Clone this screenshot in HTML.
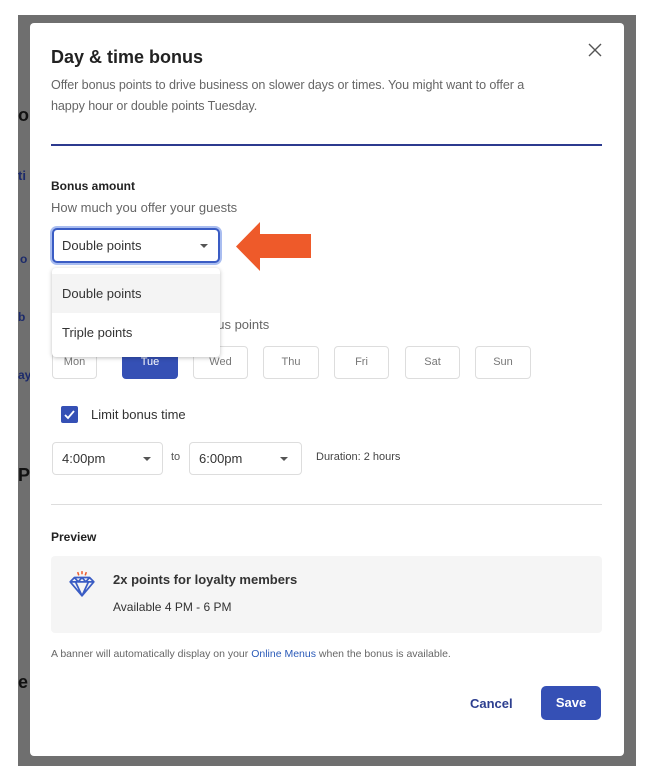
<!DOCTYPE html>
<html><head><meta charset="utf-8"><style>
*{box-sizing:border-box;margin:0;padding:0}
body{width:652px;height:780px;background:#fff;font-family:"Liberation Sans",sans-serif;position:relative;overflow:hidden;color:#222}
.ov{position:absolute;left:18px;top:15px;width:618px;height:751px;background:#6f6f6f}
.bg{position:absolute;color:#1c2a6a;font-weight:bold;font-size:14px}
.m{position:absolute;left:30px;top:23px;width:594px;height:733px;background:#fff;border-radius:4px}
.a{position:absolute}
.t{font-size:18px;font-weight:bold;color:#222}
.g{color:#666;font-size:13px}
.day{position:absolute;top:323px;height:33px;border:1px solid #ddd;border-radius:4px;font-size:11px;color:#777;text-align:center;line-height:31px;background:#fff}
.sel{position:absolute;border:1px solid #ddd;border-radius:4px;height:33px;font-size:13px;line-height:31px;padding-left:9px;color:#333}
.car{position:absolute;width:0;height:0;border-left:4px solid transparent;border-right:4px solid transparent;border-top:4px solid #555}
</style></head><body>
<div class="ov"></div>
<div class="bg" style="left:18px;top:105px;font-size:18px;color:#111">o</div>
<div class="bg" style="left:18px;top:168px;font-size:13px">ti</div>
<div class="bg" style="left:20px;top:252px;font-size:12px">o</div>
<div class="bg" style="left:18px;top:310px;font-size:12px">b</div>
<div class="bg" style="left:18px;top:368px;font-size:12px">ay</div>
<div class="bg" style="left:18px;top:465px;font-size:18px;color:#111">P</div>
<div class="bg" style="left:18px;top:672px;font-size:18px;color:#111">e</div>

<div class="m">
<div class="a t" style="left:21px;top:24px">Day &amp; time bonus</div>
<svg class="a" style="left:558px;top:20px" width="14" height="14"><path d="M1 1L13 13M13 1L1 13" stroke="#555" stroke-width="1.4"/></svg>
<div class="a g" style="left:21px;top:52px;width:570px;line-height:21px;font-size:12.6px;letter-spacing:-0.1px;white-space:nowrap">Offer bonus points to drive business on slower days or times. You might want to offer a<br>happy hour or double points Tuesday.</div>
<div class="a" style="left:21px;top:121px;width:551px;height:2px;background:#2c3a8f"></div>
<div class="a" style="left:21px;top:156px;font-size:12px;font-weight:bold">Bonus amount</div>
<div class="a g" style="left:21px;top:177px">How much you offer your guests</div>
<div class="a g" style="left:180px;top:294px">nus points</div>

<div class="day" style="left:22px;width:45px">Mon</div>
<div class="day" style="left:92px;width:56px;background:#3550b5;border-color:#3550b5;color:#fff">Tue</div>
<div class="day" style="left:163px;width:55px">Wed</div>
<div class="day" style="left:233px;width:56px">Thu</div>
<div class="day" style="left:304px;width:55px">Fri</div>
<div class="day" style="left:375px;width:55px">Sat</div>
<div class="day" style="left:445px;width:56px">Sun</div>

<div class="a" style="left:22px;top:205px;width:168px;height:35px;border:2px solid #3a5cc4;border-radius:5px;box-shadow:0 0 0 2px #a9bdf0;font-size:13px;line-height:31px;padding-left:8px;color:#333;background:#fff">Double points<div class="car" style="left:146px;top:14px"></div></div>
<div class="a" style="left:22px;top:245px;width:168px;height:89px;background:#fff;border-radius:4px;box-shadow:0 1px 4px rgba(0,0,0,.25)">
<div style="margin-top:6px;height:39px;background:#f4f4f4;font-size:13px;line-height:39px;padding-left:10px;color:#333">Double points</div>
<div style="height:39px;font-size:13px;line-height:39px;padding-left:10px;color:#333">Triple points</div>
</div>
<svg class="a" style="left:206px;top:199px" width="76" height="49"><path d="M0 24.5L24 0V12H75V36H24V49Z" fill="#ee5a2a"/></svg>

<div class="a" style="left:31px;top:383px;width:17px;height:17px;background:#3550b5;border-radius:2px"><svg width="17" height="17"><path d="M4 9l3 3 6-7" stroke="#fff" stroke-width="1.8" fill="none"/></svg></div>
<div class="a" style="left:61px;top:384px;font-size:13px;color:#333">Limit bonus time</div>
<div class="sel" style="left:22px;top:419px;width:111px">4:00pm<div class="car" style="left:90px;top:14px"></div></div>
<div class="a" style="left:141px;top:428px;font-size:11px;color:#555">to</div>
<div class="sel" style="left:159px;top:419px;width:113px">6:00pm<div class="car" style="left:90px;top:14px"></div></div>
<div class="a" style="left:286px;top:428px;font-size:11px;color:#444">Duration: 2 hours</div>

<div class="a" style="left:21px;top:481px;width:551px;height:1px;background:#ddd"></div>
<div class="a" style="left:21px;top:507px;font-size:12px;font-weight:bold">Preview</div>
<div class="a" style="left:21px;top:533px;width:551px;height:77px;background:#f5f5f5;border-radius:4px">
<svg class="a" style="left:17px;top:13px" width="28" height="30" viewBox="0 0 26 26"><path d="M9 2l1 3M13 1v3M17 2l-1 3" stroke="#ee5a2a" stroke-width="1.4"/><path d="M2 11l4-4h14l4 4-11 13zM2 11h22M7 11l6 13 6-13M6 7l3.5 4 3.5-4 3.5 4 3.5-4" stroke="#3a5cc4" stroke-width="1.6" fill="none" stroke-linejoin="round"/></svg>
<div class="a" style="left:62px;top:16px;font-size:13px;font-weight:bold;color:#333">2x points for loyalty members</div>
<div class="a" style="left:62px;top:44px;font-size:12px;color:#333">Available 4 PM - 6 PM</div>
</div>
<div class="a" style="left:21px;top:625px;font-size:10.5px;color:#666">A banner will automatically display on your <span style="color:#2a5ab8">Online Menus</span> when the bonus is available.</div>
<div class="a" style="left:440px;top:673px;font-size:13px;font-weight:bold;color:#2c3e8f">Cancel</div>
<div class="a" style="left:511px;top:663px;width:60px;height:34px;background:#3550b5;border-radius:5px;color:#fff;font-size:13px;font-weight:bold;text-align:center;line-height:34px">Save</div>
</div>
</body></html>
